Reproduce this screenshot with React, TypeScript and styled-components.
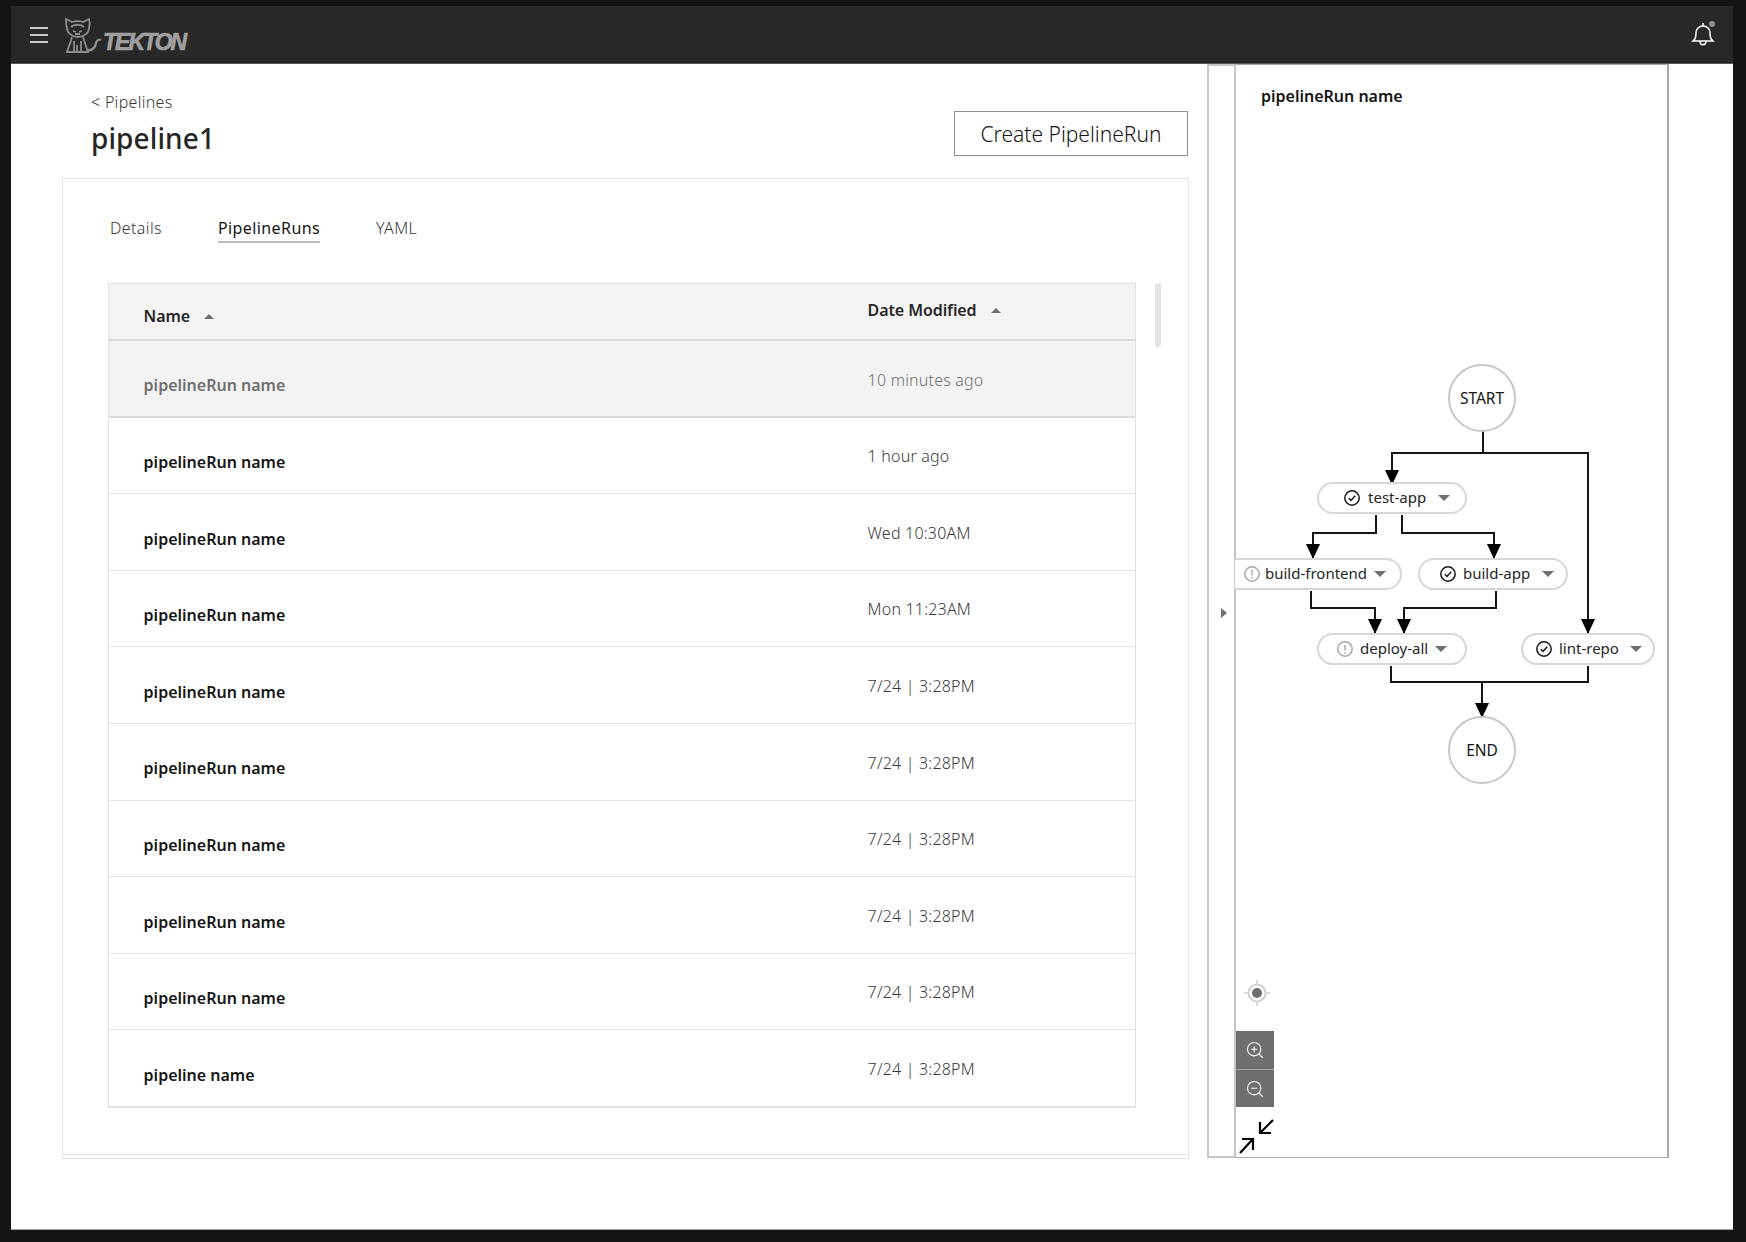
import React from 'react';
import styled, { createGlobalStyle } from 'styled-components';
import { ZoomIn, ZoomOut } from 'lucide-react';

const FONT = '"Noto Sans", "Liberation Sans", sans-serif';

const GlobalStyle = createGlobalStyle`
  html, body {
    margin: 0;
    padding: 0;
    background: #121416;
    font-family: ${FONT};
    color: #161616;
  }
  * { box-sizing: border-box; }
`;

const Frame = styled.div`
  width: 1722px;
  height: 1224px;
  margin: 6px 0 0 11px;
  background: #fff;
  display: flex;
  flex-direction: column;
  border-bottom: 1px solid #a8a8a8;
`;

const TopBar = styled.header`
  height: 58px;
  flex: none;
  background: #282828;
  border-bottom: 1px solid #555;
  display: flex;
  align-items: center;
  padding: 0 16px 0 19px;
`;

const Logo = styled.div`
  display: flex;
  align-items: flex-end;
  margin-left: 16px;
  height: 40px;
`;

const LogoWord = styled.span`
  font-family: "Liberation Sans", sans-serif;
  font-style: italic;
  font-weight: 700;
  font-size: 23px;
  line-height: 24px;
  letter-spacing: -2px;
  color: #a0a0a0;
  -webkit-text-stroke: 0.7px #a0a0a0;
  margin-left: -1px;
  margin-bottom: 1px;
`;

const BellSlot = styled.div`
  margin-left: auto;
  width: 28px;
  height: 28px;
  margin-top: -2px;
`;

const Body = styled.div`
  flex: 1;
  display: flex;
  min-height: 0;
`;

const Main = styled.main`
  width: 1178px;
  flex: none;
  padding-left: 51px;
`;

const TitleRow = styled.div`
  height: 114px;
  display: flex;
  justify-content: space-between;
  align-items: flex-start;
  padding: 0 1px 0 29px;
`;

const Crumb = styled.div`
  font-size: 16px;
  line-height: 20px;
  font-weight: 300;
  letter-spacing: 0.3px;
  color: #393939;
  margin-top: 28px;
`;

const Title = styled.h1`
  margin: 8px 0 0;
  font-size: 28px;
  line-height: 36px;
  font-weight: 500;
  letter-spacing: 0.1px;
  color: #262626;
`;

const CreateButton = styled.button`
  margin-top: 47px;
  width: 234px;
  height: 45px;
  background: #fff;
  border: 1px solid #8d8d8d;
  font: 300 21px/24px ${FONT};
  color: #161616;
  padding: 0;
`;

const Card = styled.section`
  height: 977px;
  border: 1px solid #e4e4e4;
  padding: 0 53px 0 45px;
`;

const CardEdge = styled.div`
  height: 4px;
  border: 1px solid #e4e4e4;
  border-top: none;
`;

const Tabs = styled.nav`
  display: flex;
  gap: 56px;
  height: 104px;
  padding: 37px 0 0 2px;
`;

const Tab = styled.div<{ $active?: boolean }>`
  font-size: 16px;
  line-height: 24px;
  height: 27px;
  letter-spacing: 0.4px;
  font-weight: ${p => (p.$active ? 400 : 300)};
  color: ${p => (p.$active ? '#161616' : '#393939')};
  border-bottom: ${p => (p.$active ? '2px solid #bdbdbd' : 'none')};
`;

const TableWrap = styled.div`
  position: relative;
`;

const Table = styled.div`
  width: 1028px;
  border: 1px solid #e0e0e0;
`;

const Scrollbar = styled.div`
  position: absolute;
  top: 0;
  left: 1047px;
  width: 6px;
  height: 64px;
  border-radius: 3px;
  background: #e4e4e4;
`;

const HeaderRow = styled.div`
  height: 57px;
  display: grid;
  grid-template-columns: 724px 1fr;
  padding-left: 34.6px;
  background: #f4f4f4;
  border-bottom: 2px solid #d8d8d8;
`;

const Row = styled.div<{ $selected?: boolean }>`
  height: 76.6px;
  display: grid;
  grid-template-columns: 724px 1fr;
  padding-left: 34.6px;
  background: ${p => (p.$selected ? '#f3f3f3' : '#fff')};
  border-bottom: ${p => (p.$selected ? '2px solid #dcdcdc' : '1px solid #e4e4e4')};
  color: ${p => (p.$selected ? '#6f6f6f' : '#161616')};
`;

const HeadCell = styled.div<{ $top: number }>`
  display: flex;
  align-items: center;
  gap: 14px;
  height: 20px;
  margin-top: ${p => p.$top}px;
  font-size: 16px;
  line-height: 20px;
  font-weight: 600;
  letter-spacing: -0.1px;
  color: #262626;
`;

const SortUp = styled.span`
  width: 0;
  height: 0;
  border-left: 5.5px solid transparent;
  border-right: 5.5px solid transparent;
  border-bottom: 5px solid #6f6f6f;
`;

const NameCell = styled.div`
  margin-top: 34.4px;
  font-size: 16px;
  line-height: 20px;
  font-weight: 600;
`;

const DateCell = styled.div<{ $selected?: boolean }>`
  margin-top: 28.6px;
  font-size: 16px;
  line-height: 20px;
  font-weight: 300;
  letter-spacing: 0.2px;
  color: ${p => (p.$selected ? '#6f6f6f' : '#393939')};
`;

const Rail = styled.aside`
  margin-left: 18px;
  width: 29px;
  height: 1094px;
  flex: none;
  border: 2px solid #c6c6c6;
  display: flex;
  align-items: center;
  justify-content: center;
  padding: 3px 0 0 4px;
`;

const RailCaret = styled.span`
  width: 0;
  height: 0;
  border-top: 5.5px solid transparent;
  border-bottom: 5.5px solid transparent;
  border-left: 6px solid #6f6f6f;
`;

const Panel = styled.section`
  position: relative;
  width: 434px;
  height: 1094px;
  margin-left: -1px;
  flex: none;
  border-top: 1px solid #a8a8a8;
  border-right: 2px solid #a8a8a8;
  border-bottom: 1px solid #a8a8a8;
  overflow: hidden;
`;

const PanelTitle = styled.div`
  padding: 20.6px 0 0 26px;
  font-size: 16px;
  line-height: 20px;
  font-weight: 600;
  color: #161616;
`;

const Wires = styled.svg`
  position: absolute;
  left: 0;
  top: 0;
`;

const RoundNode = styled.div<{ $x: number; $y: number }>`
  position: absolute;
  left: ${p => p.$x}px;
  top: ${p => p.$y}px;
  width: 68px;
  height: 68px;
  border-radius: 50%;
  border: 2px solid #c6c6c6;
  background: #fff;
  display: flex;
  align-items: center;
  justify-content: center;
  font-size: 15.5px;
  color: #161616;
`;

const TaskNode = styled.div<{ $x: number; $y: number; $w: number; $pl: number; $pr: number; $gap: number }>`
  position: absolute;
  left: ${p => p.$x}px;
  top: ${p => p.$y}px;
  width: ${p => p.$w}px;
  height: 32px;
  border-radius: 16px;
  border: 2px solid #d6d6d6;
  background: #fff;
  display: flex;
  align-items: center;
  gap: ${p => p.$gap}px;
  padding: 0 ${p => p.$pr}px 0 ${p => p.$pl}px;
  font-size: 15px;
  white-space: nowrap;
  color: #262626;
  & > svg { flex: none; }
`;

const TaskLabel = styled.span`
  margin-top: -3px;
`;

const TaskCaret = styled.span`
  margin-left: auto;
  flex: none;
  width: 0;
  height: 0;
  border-left: 6.5px solid transparent;
  border-right: 6.5px solid transparent;
  border-top: 6px solid #6f6f6f;
`;

const Controls = styled.div`
  position: absolute;
  left: 1px;
  bottom: 0;
  width: 38px;
  display: flex;
  flex-direction: column;
`;

const TargetSlot = styled.div`
  height: 38px;
  display: flex;
  align-items: center;
  justify-content: center;
  margin: 0 0 19px 6px;
  width: 30px;
`;

const ZoomButton = styled.div`
  height: 38px;
  background: #6f6f6f;
  display: flex;
  align-items: center;
  justify-content: center;
  color: #fff;
  & + & { border-top: 1px solid #a8a8a8; }
`;

const CollapseSlot = styled.div`
  height: 50px;
`;

const Burger = () => (
  <svg width="18" height="16" viewBox="0 0 18 16" fill="none" stroke="#fff" strokeWidth="1.6">
    <path d="M0 1h18M0 8h18M0 15h18" />
  </svg>
);

const CatLogo = () => (
  <svg width="40" height="38" viewBox="0 0 40 38" fill="none" stroke="#8d8d8d" strokeWidth="1.8">
    <path d="M2 2l6 3c3-1 8-1 11 0l6-3c1 3 1 6 0 9 0 5-5 9-11 9S3 16 3 11C2 8 2 5 2 2z" />
    <path d="M7 10c3-3 10-3 13 0M9 14l3 1M18 14l-3 1M11 17h5" />
    <path d="M8 20c-1 4-2 7-3 9l-2 6h21l-2-6c-1-3-2-6-3-9" />
    <path d="M10 24v10M17 24v10M13 28v6" />
    <path d="M23 33c5 1 8-2 9-7 1-3 3-4 5-3" strokeWidth="2.4" />
  </svg>
);

const Bell = () => (
  <svg width="28" height="28" viewBox="0 0 28 28" fill="none" stroke="#fff" strokeWidth="1.5">
    <path d="M4 21c2-2 3-3 3-8 0-4 3-7 7-7s7 3 7 7c0 5 1 6 3 8z" />
    <path d="M14 3v3M11 21c0 5 6 5 6 0" />
    <circle cx="23" cy="4" r="3" fill="#8d8d8d" stroke="none" />
  </svg>
);

const CheckIcon = () => (
  <svg width="16" height="16" viewBox="0 0 16 16" fill="none" stroke="#161616" strokeWidth="1.5">
    <circle cx="8" cy="8" r="7.2" />
    <path d="M4.8 8.2l2.2 2.2 4.2-4.6" />
  </svg>
);

const AlertIcon = () => (
  <svg width="16" height="16" viewBox="0 0 16 16" fill="none" stroke="#a8a8a8" strokeWidth="1.5">
    <circle cx="8" cy="8" r="7.2" />
    <path d="M8 4v5.5M8 11v1.4" />
  </svg>
);

const TargetIcon = () => (
  <svg width="26" height="26" viewBox="0 0 26 26" fill="none">
    <circle cx="13" cy="13" r="8.5" stroke="#d0d0d0" strokeWidth="2" />
    <path d="M13 0v5M13 21v5M0 13h5M21 13h5" stroke="#d0d0d0" strokeWidth="1.5" />
    <circle cx="13" cy="13" r="5" fill="#6f6f6f" />
  </svg>
);

const CollapseIcon = () => (
  <svg width="38" height="50" viewBox="0 0 38 50" fill="none" stroke="#000" strokeWidth="2.2">
    <path d="M37 13L24 26M24 15V26H35" />
    <path d="M4 46L17 32M6 32H17V43" />
  </svg>
);

type Task = { label: string; ok: boolean; x: number; y: number; w: number; pl: number; pr: number; gap: number };

// panel origin is 1234,65 in the reference
const TASKS: Task[] = [
  { label: 'test-app', ok: true, x: 82, y: 417, w: 150, pl: 25, pr: 15, gap: 8 },
  { label: 'build-frontend', ok: false, x: -45, y: 493, w: 212, pl: 52, pr: 14, gap: 5 },
  { label: 'build-app', ok: true, x: 183, y: 493, w: 150, pl: 20, pr: 12, gap: 7 },
  { label: 'deploy-all', ok: false, x: 82, y: 568, w: 150, pl: 18, pr: 18, gap: 7 },
  { label: 'lint-repo', ok: true, x: 286, y: 568, w: 134, pl: 13, pr: 11, gap: 7 },
];

const WIRES = [
  'M248 301V388M157 418V388H353V569',
  'M141 450V468H78V494',
  'M167 450V468H259V494',
  'M76 526V543H140V569',
  'M261 526V543H169V569',
  'M156 601V617H353V601M247 617V650',
];

const HEADS: [number, number][] = [
  [157, 405],
  [78, 479],
  [259, 479],
  [140, 554],
  [169, 554],
  [353, 554],
  [247, 638],
];

const ROWS = [
  ['pipelineRun name', '10 minutes ago'],
  ['pipelineRun name', '1 hour ago'],
  ['pipelineRun name', 'Wed 10:30AM'],
  ['pipelineRun name', 'Mon 11:23AM'],
  ['pipelineRun name', '7/24 | 3:28PM'],
  ['pipelineRun name', '7/24 | 3:28PM'],
  ['pipelineRun name', '7/24 | 3:28PM'],
  ['pipelineRun name', '7/24 | 3:28PM'],
  ['pipelineRun name', '7/24 | 3:28PM'],
  ['pipeline name', '7/24 | 3:28PM'],
];

const App: React.FC = () => (
  <>
    <GlobalStyle />
    <Frame>
      <TopBar>
        <Burger />
        <Logo>
          <CatLogo />
          <LogoWord>TEKTON</LogoWord>
        </Logo>
        <BellSlot>
          <Bell />
        </BellSlot>
      </TopBar>
      <Body>
        <Main>
          <TitleRow>
            <div>
              <Crumb>&lt; Pipelines</Crumb>
              <Title>pipeline1</Title>
            </div>
            <CreateButton>Create PipelineRun</CreateButton>
          </TitleRow>
          <Card>
            <Tabs>
              <Tab>Details</Tab>
              <Tab $active>PipelineRuns</Tab>
              <Tab>YAML</Tab>
            </Tabs>
            <TableWrap>
              <Table>
                <HeaderRow>
                  <HeadCell $top={22}>
                    Name <SortUp />
                  </HeadCell>
                  <HeadCell $top={16}>
                    Date Modified <SortUp />
                  </HeadCell>
                </HeaderRow>
                {ROWS.map(([name, date], i) => (
                  <Row key={i} $selected={i === 0}>
                    <NameCell>{name}</NameCell>
                    <DateCell $selected={i === 0}>{date}</DateCell>
                  </Row>
                ))}
              </Table>
              <Scrollbar />
            </TableWrap>
          </Card>
          <CardEdge />
        </Main>
        <Rail>
          <RailCaret />
        </Rail>
        <Panel>
          <PanelTitle>pipelineRun name</PanelTitle>
          <Wires width="434" height="760">
            {WIRES.map((d, i) => (
              <path key={i} d={d} fill="none" stroke="#161616" strokeWidth="2" />
            ))}
            {HEADS.map(([x, y], i) => (
              <path key={i} d={`M${x - 7} ${y}h14l-7 15z`} fill="#000" />
            ))}
          </Wires>
          <RoundNode $x={213} $y={299}>START</RoundNode>
          <RoundNode $x={213} $y={651}>END</RoundNode>
          {TASKS.map(t => (
            <TaskNode key={t.label} $x={t.x} $y={t.y} $w={t.w} $pl={t.pl} $pr={t.pr} $gap={t.gap}>
              {t.ok ? <CheckIcon /> : <AlertIcon />}
              <TaskLabel>{t.label}</TaskLabel>
              <TaskCaret />
            </TaskNode>
          ))}
          <Controls>
            <TargetSlot>
              <TargetIcon />
            </TargetSlot>
            <ZoomButton>
              <ZoomIn size={20} strokeWidth={1.3} />
            </ZoomButton>
            <ZoomButton>
              <ZoomOut size={20} strokeWidth={1.3} />
            </ZoomButton>
            <CollapseSlot>
              <CollapseIcon />
            </CollapseSlot>
          </Controls>
        </Panel>
      </Body>
    </Frame>
  </>
);

export default App;
